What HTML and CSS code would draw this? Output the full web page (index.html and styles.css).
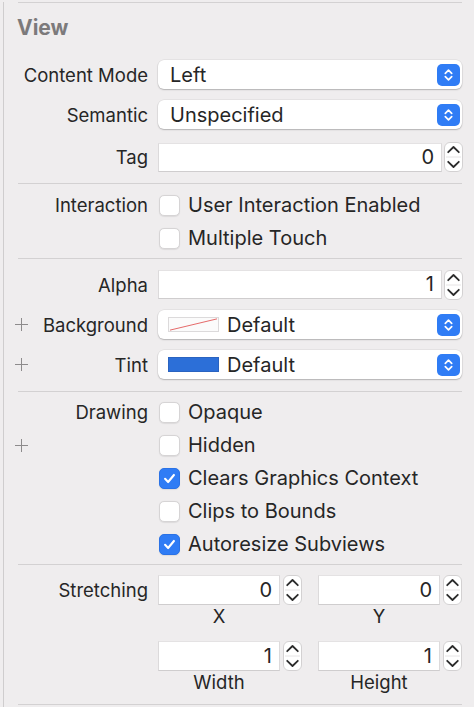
FILE: index.html
```html
<!DOCTYPE html>
<html>
<head>
<meta charset="utf-8">
<link rel="stylesheet" href="styles.css">
</head>
<body>
<div class="panel">
  <div class="rule top"></div>
  <div class="title">View</div>

  <div class="section s1">
    <div class="row">
      <div class="label"><span class="text">Content Mode</span></div>
      <div class="popup"><span class="value">Left</span>
        <svg class="arrows" viewBox="0 0 23 22"><rect x="0" y="0" width="23" height="22" rx="5" fill="#2f7cf5"/><path d="M8.3 9.3 L11.5 6.2 L14.7 9.3 M8.3 12.7 L11.5 15.8 L14.7 12.7" fill="none" stroke="#fff" stroke-width="1.7" stroke-linecap="round" stroke-linejoin="round"/></svg>
      </div>
    </div>
    <div class="row">
      <div class="label"><span class="text">Semantic</span></div>
      <div class="popup"><span class="value">Unspecified</span>
        <svg class="arrows" viewBox="0 0 23 22"><rect x="0" y="0" width="23" height="22" rx="5" fill="#2f7cf5"/><path d="M8.3 9.3 L11.5 6.2 L14.7 9.3 M8.3 12.7 L11.5 15.8 L14.7 12.7" fill="none" stroke="#fff" stroke-width="1.7" stroke-linecap="round" stroke-linejoin="round"/></svg>
      </div>
    </div>
    <div class="row tall tag">
      <div class="label"><span class="text">Tag</span></div>
      <div class="numfield">
        <div class="field">0</div>
        <svg class="stepper" viewBox="0 0 19 30"><rect x="0.5" y="0.5" width="18" height="29" rx="5.5" fill="#fff" stroke="#d3d1d2"/><line x1="2" y1="15" x2="17" y2="15" stroke="#e6e4e5"/><path d="M4.2 10.2 L9.5 5 L14.8 10.2 M4.2 19.8 L9.5 25 L14.8 19.8" fill="none" stroke="#2b2b2b" stroke-width="1.8" stroke-linecap="round" stroke-linejoin="round"/></svg>
      </div>
    </div>
  </div>

  <div class="rule"></div>

  <div class="section s2">
    <div class="row check">
      <div class="label"><span class="text">Interaction</span></div>
      <div class="checkline"><span class="box"></span><span class="ctext">User Interaction Enabled</span></div>
    </div>
    <div class="row check">
      <div class="label"></div>
      <div class="checkline"><span class="box"></span><span class="ctext">Multiple Touch</span></div>
    </div>
  </div>

  <div class="rule"></div>

  <div class="section s3">
    <div class="row">
      <div class="label"><span class="text">Alpha</span></div>
      <div class="numfield">
        <div class="field">1</div>
        <svg class="stepper" viewBox="0 0 19 30"><rect x="0.5" y="0.5" width="18" height="29" rx="5.5" fill="#fff" stroke="#d3d1d2"/><line x1="2" y1="15" x2="17" y2="15" stroke="#e6e4e5"/><path d="M4.2 10.2 L9.5 5 L14.8 10.2 M4.2 19.8 L9.5 25 L14.8 19.8" fill="none" stroke="#2b2b2b" stroke-width="1.8" stroke-linecap="round" stroke-linejoin="round"/></svg>
      </div>
    </div>
    <div class="row">
      <div class="label"><span class="plus"></span><span class="text">Background</span></div>
      <div class="popup"><span class="swatch clear"><svg viewBox="0 0 51 15" preserveAspectRatio="none"><line x1="1" y1="14" x2="50" y2="1" stroke="#e25b5b" stroke-width="1"/></svg></span><span class="value">Default</span>
        <svg class="arrows" viewBox="0 0 23 22"><rect x="0" y="0" width="23" height="22" rx="5" fill="#2f7cf5"/><path d="M8.3 9.3 L11.5 6.2 L14.7 9.3 M8.3 12.7 L11.5 15.8 L14.7 12.7" fill="none" stroke="#fff" stroke-width="1.7" stroke-linecap="round" stroke-linejoin="round"/></svg>
      </div>
    </div>
    <div class="row">
      <div class="label"><span class="plus"></span><span class="text">Tint</span></div>
      <div class="popup"><span class="swatch blue"></span><span class="value">Default</span>
        <svg class="arrows" viewBox="0 0 23 22"><rect x="0" y="0" width="23" height="22" rx="5" fill="#2f7cf5"/><path d="M8.3 9.3 L11.5 6.2 L14.7 9.3 M8.3 12.7 L11.5 15.8 L14.7 12.7" fill="none" stroke="#fff" stroke-width="1.7" stroke-linecap="round" stroke-linejoin="round"/></svg>
      </div>
    </div>
  </div>

  <div class="rule"></div>

  <div class="section s4">
    <div class="row check">
      <div class="label"><span class="text">Drawing</span></div>
      <div class="checkline"><span class="box"></span><span class="ctext">Opaque</span></div>
    </div>
    <div class="row check">
      <div class="label"><span class="plus"></span></div>
      <div class="checkline"><span class="box"></span><span class="ctext">Hidden</span></div>
    </div>
    <div class="row check">
      <div class="label"></div>
      <div class="checkline"><span class="box on"><svg viewBox="0 0 21 21"><path d="M5.6 10.8 L9 14.4 L15.4 6.6" fill="none" stroke="#fff" stroke-width="2.3" stroke-linecap="round" stroke-linejoin="round"/></svg></span><span class="ctext">Clears Graphics Context</span></div>
    </div>
    <div class="row check">
      <div class="label"></div>
      <div class="checkline"><span class="box"></span><span class="ctext">Clips to Bounds</span></div>
    </div>
    <div class="row check">
      <div class="label"></div>
      <div class="checkline"><span class="box on"><svg viewBox="0 0 21 21"><path d="M5.6 10.8 L9 14.4 L15.4 6.6" fill="none" stroke="#fff" stroke-width="2.3" stroke-linecap="round" stroke-linejoin="round"/></svg></span><span class="ctext">Autoresize Subviews</span></div>
    </div>
  </div>

  <div class="rule"></div>

  <div class="section s5">
    <div class="row top-aligned">
      <div class="label tall"><span class="text">Stretching</span></div>
      <div class="stretch">
        <div class="group">
          <div class="field">0</div>
          <svg class="stepper" viewBox="0 0 19 30"><rect x="0.5" y="0.5" width="18" height="29" rx="5.5" fill="#fff" stroke="#d3d1d2"/><line x1="2" y1="15" x2="17" y2="15" stroke="#e6e4e5"/><path d="M4.2 10.2 L9.5 5 L14.8 10.2 M4.2 19.8 L9.5 25 L14.8 19.8" fill="none" stroke="#2b2b2b" stroke-width="1.8" stroke-linecap="round" stroke-linejoin="round"/></svg>
          <div class="cap">X</div>
        </div>
        <div class="group">
          <div class="field">0</div>
          <svg class="stepper" viewBox="0 0 19 30"><rect x="0.5" y="0.5" width="18" height="29" rx="5.5" fill="#fff" stroke="#d3d1d2"/><line x1="2" y1="15" x2="17" y2="15" stroke="#e6e4e5"/><path d="M4.2 10.2 L9.5 5 L14.8 10.2 M4.2 19.8 L9.5 25 L14.8 19.8" fill="none" stroke="#2b2b2b" stroke-width="1.8" stroke-linecap="round" stroke-linejoin="round"/></svg>
          <div class="cap">Y</div>
        </div>
        <div class="group">
          <div class="field">1</div>
          <svg class="stepper" viewBox="0 0 19 30"><rect x="0.5" y="0.5" width="18" height="29" rx="5.5" fill="#fff" stroke="#d3d1d2"/><line x1="2" y1="15" x2="17" y2="15" stroke="#e6e4e5"/><path d="M4.2 10.2 L9.5 5 L14.8 10.2 M4.2 19.8 L9.5 25 L14.8 19.8" fill="none" stroke="#2b2b2b" stroke-width="1.8" stroke-linecap="round" stroke-linejoin="round"/></svg>
          <div class="cap">Width</div>
        </div>
        <div class="group">
          <div class="field">1</div>
          <svg class="stepper" viewBox="0 0 19 30"><rect x="0.5" y="0.5" width="18" height="29" rx="5.5" fill="#fff" stroke="#d3d1d2"/><line x1="2" y1="15" x2="17" y2="15" stroke="#e6e4e5"/><path d="M4.2 10.2 L9.5 5 L14.8 10.2 M4.2 19.8 L9.5 25 L14.8 19.8" fill="none" stroke="#2b2b2b" stroke-width="1.8" stroke-linecap="round" stroke-linejoin="round"/></svg>
          <div class="cap">Height</div>
        </div>
      </div>
    </div>
  </div>

  <div class="rule last"></div>
</div>
</body>
</html>
```

FILE: styles.css
```css
* { box-sizing: border-box; }

html, body {
  margin: 0;
  padding: 0;
  background: #efedee;
  height: 707px;
  overflow: hidden;
}

body {
  font-family: "Inter", "Noto Sans", sans-serif;
  font-size: 18.5px;
  color: #262626;
}

.panel {
  margin-left: 3px;
  border-left: 1px solid #cfcdce;
  padding: 0 11px 0 10px;
  height: 707px;
}

.rule {
  height: 1px;
  background: #d3d1d2;
  margin: 0 1px 0 4px;
}
.rule.top { margin-top: 2px; }

.title {
  margin-top: 13px;
  height: 24px;
  line-height: 24px;
  padding-left: 3px;
  font-size: 21px;
  font-weight: 700;
  color: #7c7a7b;
}

.section {
  display: flex;
  flex-direction: column;
}
.s1 { margin-top: 20px; gap: 11px; margin-bottom: 11px; }
.s1 .tag { margin-top: 2px; }
.s2 { margin-top: 9px; gap: 9px; margin-bottom: 8px; }
.s3 { margin-top: 11px; gap: 11px; margin-bottom: 12px; }
.s4 { margin-top: 8px; gap: 9px; margin-bottom: 8px; }
.s5 { margin-top: 10px; margin-bottom: 11px; }

.row {
  display: flex;
  align-items: center;
  gap: 10px;
  height: 29px;
}
.row.tall { height: 30px; }
.row.check { height: 24px; }
.row.top-aligned { align-items: flex-start; height: auto; }

.label {
  width: 134px;
  flex: none;
  display: flex;
  align-items: center;
  white-space: nowrap;
}
.label.tall { height: 30px; }
.label .text { margin-left: auto; }

.plus {
  position: relative;
  width: 13px;
  height: 13px;
  margin-left: 1px;
  flex: none;
}
.plus::before, .plus::after {
  content: "";
  position: absolute;
  background: #8d8b8c;
}
.plus::before { left: 0; right: 0; top: 6px; height: 1.3px; }
.plus::after { top: 0; bottom: 0; left: 6px; width: 1.3px; }

.popup {
  flex: 1;
  margin-right: 1px;
  height: 29px;
  background: #fff;
  border-radius: 6px;
  box-shadow: 0 0 0 0.5px rgba(0,0,0,0.08), 0 1px 1.5px rgba(0,0,0,0.22);
  display: flex;
  align-items: center;
  padding: 0 2px 0 12px;
}
.popup .value { flex: 1; white-space: nowrap; font-size: 20px; }
.popup .arrows { width: 23px; height: 22px; flex: none; }

.swatch {
  width: 51px;
  height: 15px;
  margin-left: -2px;
  margin-right: 8px;
  flex: none;
  display: block;
}
.swatch.clear {
  background: #fbfbfb;
  border: 1px solid #dcdadb;
}
.swatch.clear svg { display: block; width: 100%; height: 100%; }
.swatch.blue {
  background: #2c6fd8;
  border: 1px solid #2a63c0;
}

.numfield {
  flex: 1;
  display: flex;
  align-items: center;
  gap: 2px;
}
.field {
  flex: 1;
  height: 29px;
  background: #fff;
  border: 1px solid #dcdadb;
  border-top-color: #e4e2e3;
  border-bottom-color: #cfcdce;
  text-align: right;
  padding-right: 7px;
  line-height: 27px;
  font-size: 20px;
}
.stepper { width: 19px; height: 30px; flex: none; display: block; }

.checkline {
  display: flex;
  align-items: center;
  gap: 8px;
  margin-left: 1px;
  white-space: nowrap;
}
.ctext { font-size: 20px; }
.box {
  width: 21px;
  height: 21px;
  border-radius: 5px;
  background: #fff;
  border: 1px solid #d6d4d5;
  box-shadow: 0 0.5px 1px rgba(0,0,0,0.08);
  flex: none;
  display: block;
}
.box.on {
  background: #2f7cf5;
  border-color: #2a72e6;
}
.box svg { display: block; width: 19px; height: 19px; }

.stretch {
  flex: 1;
  display: grid;
  grid-template-columns: 145px 145px;
  column-gap: 15px;
  row-gap: 14px;
}
.group {
  display: grid;
  grid-template-columns: 1fr 20px;
  column-gap: 3px;
  align-items: center;
}
.group .field { height: 30px; line-height: 28px; }
.group .cap {
  text-align: center;
  height: 22px;
  line-height: 22px;
}
```
